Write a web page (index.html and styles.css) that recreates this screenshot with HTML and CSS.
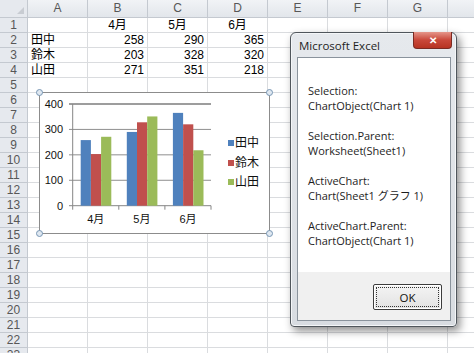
FILE: index.html
```
<!doctype html>
<html>
<head>
  <meta charset="utf-8">
  <link rel="stylesheet" href="styles.css">
</head>
<body>

  <div id="sheet" class="sheet"></div>

  <div class="chart">
    <svg width="229" height="140" viewBox="0 0 229 140">
      <g id="grid"></g>
      <g id="bars"></g>
      <g id="labels" class="axis-text"></g>
      <g class="legend">
        <rect x="188" y="47" width="6" height="6" fill="#4f81bd"/>
        <text x="195" y="54">田中</text>
        <rect x="188" y="67" width="6" height="6" fill="#c0504d"/>
        <text x="195" y="74">鈴木</text>
        <rect x="188" y="86" width="6" height="6" fill="#9bbb59"/>
        <text x="195" y="93">山田</text>
      </g>
    </svg>
    <span class="handle tl"></span>
    <span class="handle tr"></span>
    <span class="handle bl"></span>
    <span class="handle br"></span>
  </div>

  <div class="dialog">
    <div class="titlebar">
      <span class="title">Microsoft Excel</span>
      <button class="close">&#x2715;</button>
    </div>
    <div class="client">
      <div class="message">
        <p>Selection:<br>ChartObject(Chart 1)</p>
        <p>Selection.Parent:<br>Worksheet(Sheet1)</p>
        <p>ActiveChart:<br>Chart(Sheet1 グラフ 1)</p>
        <p>ActiveChart.Parent:<br>ChartObject(Chart 1)</p>
      </div>
      <div class="buttons">
        <button class="ok">OK</button>
      </div>
    </div>
  </div>

  <script>
    var cols = ['A', 'B', 'C', 'D', 'E', 'F', 'G', 'H'];
    var data = [
      ['', '4月', '5月', '6月'],
      ['田中', 258, 290, 365],
      ['鈴木', 203, 328, 320],
      ['山田', 271, 351, 218]
    ];

    // spreadsheet
    var markup = "<div class='corner'></div>";
    for(var c = 0; c < cols.length; c++){
      markup += "<div class='colhead'>" + (c < 7 ? cols[c] : "") + "</div>";
    }
    for(var r = 0; r < 23; r++){
      markup += "<div class='rowhead'>" + (r + 1) + "</div>";
      for(var c = 0; c < cols.length; c++){
        var v = (data[r] && data[r][c] !== undefined) ? data[r][c] : "";
        var cls = "cell";
        if(typeof v == "number") cls += " num";
        else if(r == 0 && v) cls += " center";
        markup += "<div class='" + cls + "'>" + v + "</div>";
      }
    }
    document.getElementById("sheet").innerHTML = markup;

    // chart
    var left = 32.7, right = 171, zero = 112.7, scale = 0.2543;
    var step = (right - left) / 3;
    var colors = ['#4f81bd', '#c0504d', '#9bbb59'];

    var grid = "";
    for(var g = 1; g <= 4; g++){
      var y = zero - g * 100 * scale;
      grid += "<line x1='29' x2='" + right + "' y1='" + y + "' y2='" + y + "' class='" + (g == 4 ? "gl top" : "gl") + "'/>";
    }
    grid += "<line x1='" + left + "' x2='" + left + "' y1='" + (zero - 400 * scale) + "' y2='" + zero + "' class='ax'/>";
    grid += "<line x1='29' x2='" + right + "' y1='" + zero + "' y2='" + zero + "' class='ax'/>";
    for(var t = 0; t <= 3; t++){
      var x = left + t * step;
      grid += "<line x1='" + x + "' x2='" + x + "' y1='" + zero + "' y2='" + (zero + 4) + "' class='ax'/>";
    }
    document.getElementById("grid").innerHTML = grid;

    var bars = "";
    for(var m = 0; m < 3; m++){
      for(var p = 0; p < 3; p++){
        var h = data[p + 1][m + 1] * scale;
        var bx = left + m * step + 8 + p * 10.2;
        bars += "<rect x='" + bx + "' y='" + (zero - h) + "' width='10.2' height='" + h + "' fill='" + colors[p] + "'/>";
      }
    }
    document.getElementById("bars").innerHTML = bars;

    var labels = "";
    for(var g = 0; g <= 4; g++){
      labels += "<text x='23' y='" + (zero - g * 100 * scale + 4) + "' text-anchor='end'>" + (g * 100) + "</text>";
    }
    for(var m = 0; m < 3; m++){
      labels += "<text x='" + (left + m * step + step / 2) + "' y='130' text-anchor='middle'>" + data[0][m + 1] + "</text>";
    }
    document.getElementById("labels").innerHTML = labels;
  </script>

</body>
</html>
```

FILE: styles.css
```
body{
  margin: 0;
  width: 474px;
  height: 353px;
  overflow: hidden;
  position: relative;
  background: #ffffff;
  font-family: "Liberation Sans", "Noto Sans CJK JP", sans-serif;
}

/* spreadsheet */
.sheet{
  width: 474px;
  height: 353px;
  overflow: hidden;
  display: grid;
  grid-template-columns: 28px repeat(8, 60px);
  grid-template-rows: 18px;
  grid-auto-rows: 15px;
  font-size: 12px;
  color: #000000;
}
.sheet div{
  box-sizing: border-box;
  border-right: 1px solid #dadcdf;
  border-bottom: 1px solid #dadcdf;
  line-height: 14px;
  white-space: nowrap;
  overflow: hidden;
}
.sheet .corner{
  position: relative;
  background: #e6e9ee;
  border-color: #c4c9d0;
}
.corner::after{
  content: "";
  position: absolute;
  right: 3px;
  bottom: 3px;
  border-style: solid;
  border-width: 0 0 7px 7px;
  border-color: transparent transparent #c8ccd2 transparent;
}
.sheet .colhead{
  background: linear-gradient(to bottom, #f1f3f6, #e2e6eb);
  border-color: #c4c9d0;
  text-align: center;
  line-height: 17px;
  color: #575757;
}
.sheet .rowhead{
  background: #e6e9ee;
  border-color: #c4c9d0;
  text-align: center;
  color: #575757;
}
.sheet .cell{
  padding: 0 3px;
}
.sheet .num{
  text-align: right;
}
.sheet .center{
  text-align: center;
}

/* chart */
.chart{
  position: absolute;
  left: 39px;
  top: 92px;
  width: 229px;
  height: 140px;
  border: 1px solid #8c8c8c;
  background: #ffffff;
}
.chart svg{
  display: block;
}
.gl{
  stroke: #8e8e8e;
  stroke-width: 1;
}
.gl.top{
  stroke: #7d7d7d;
  stroke-width: 1.6;
}
.ax{
  stroke: #868686;
  stroke-width: 1;
}
.axis-text{
  font-family: "Liberation Sans", "Noto Sans CJK JP", sans-serif;
  font-size: 11px;
  fill: #111111;
}
.legend{
  font-family: "Noto Sans CJK JP", sans-serif;
  font-size: 12px;
  fill: #111111;
}
.handle{
  position: absolute;
  width: 5px;
  height: 5px;
  border: 1px solid #7896b4;
  border-radius: 50%;
  background: #dfe8f1;
}
.tl{ left: -4px; top: -4px; }
.tr{ right: -4px; top: -4px; }
.bl{ left: -4px; bottom: -4px; }
.br{ right: -4px; bottom: -4px; }

/* message box */
.dialog{
  position: absolute;
  left: 290px;
  top: 32px;
  width: 167px;
  height: 295px;
  box-sizing: border-box;
  border: 1px solid #50565c;
  border-radius: 6px 6px 4px 4px;
  background: linear-gradient(to bottom, #e6e9ed, #d8dce1);
  box-shadow: 3px 4px 9px rgba(0, 0, 0, 0.45), inset 0 0 0 1px #f4f6f8;
  padding: 0 5px 5px 6px;
  display: flex;
  flex-direction: column;
}
.titlebar{
  height: 24px;
  display: flex;
  justify-content: space-between;
  align-items: flex-start;
  margin-right: -1px;
}
.title{
  font-family: "Open Sans", "Noto Sans", sans-serif;
  font-size: 11.5px;
  color: #1e1e1e;
  padding: 5px 0 0 2px;
}
.close{
  width: 39px;
  height: 17px;
  margin-top: -1px;
  padding: 0;
  border: 1px solid #7a2a22;
  border-top: none;
  border-radius: 0 0 4px 4px;
  background: linear-gradient(to bottom, #e5968a, #c9483a 50%, #b73322);
  color: #ffffff;
  font-size: 10px;
  font-weight: bold;
  line-height: 15px;
}
.client{
  flex: 1;
  border: 1px solid #8a939c;
  background: #ffffff;
  display: flex;
  flex-direction: column;
}
.message{
  flex: 1;
  padding: 25px 10px 0;
  font-family: "Open Sans", "Noto Sans CJK JP", sans-serif;
  font-size: 11px;
  line-height: 15px;
  color: #1e1e1e;
}
.message p{
  margin: 0 0 15px;
}
.buttons{
  height: 48px;
  box-sizing: border-box;
  background: #f0f0f0;
  display: flex;
  justify-content: flex-end;
  align-items: flex-start;
  padding: 12px 8px 0 0;
}
.ok{
  width: 69px;
  height: 26px;
  border: 1px solid #3c3c3c;
  border-radius: 2px;
  background: linear-gradient(to bottom, #f4f4f4, #e2e2e2);
  box-shadow: inset 0 0 0 1px #ffffff;
  outline: 1px dotted #333333;
  outline-offset: -4px;
  font-family: "Open Sans", "Noto Sans", sans-serif;
  font-size: 11.5px;
  color: #111111;
  padding: 0;
}
```
